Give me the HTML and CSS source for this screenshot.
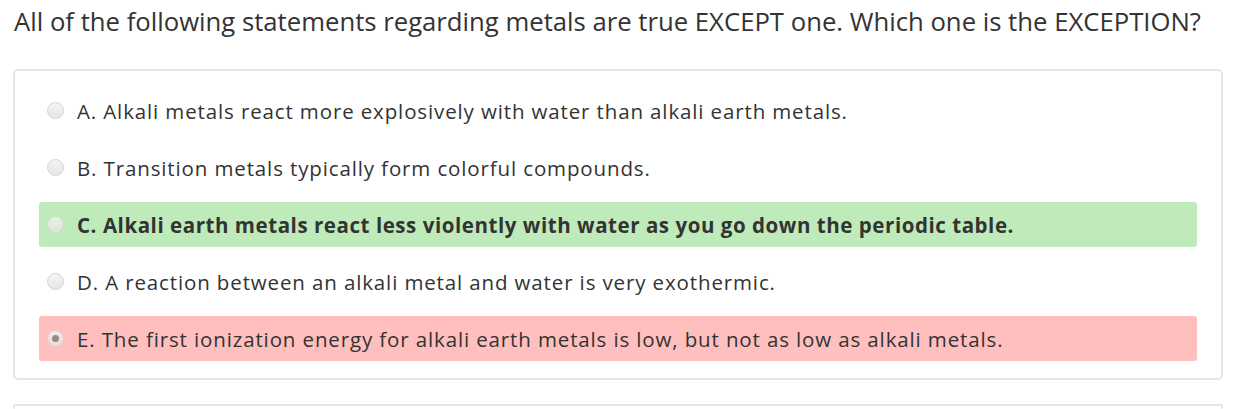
FILE: index.html
```html
<!DOCTYPE html>
<html lang="en">
<head>
  <meta charset="UTF-8">
  <title>Question</title>
  <link rel="stylesheet" href="styles.css">
</head>
<body>

  <h2 class="question">All of the following statements regarding metals are true EXCEPT one. Which one is the EXCEPTION?</h2>

  <div class="card">
    <label class="choice">
      <span class="radio"></span>
      <span class="text">A. Alkali metals react more explosively with water than alkali earth metals.</span>
    </label>
    <label class="choice">
      <span class="radio"></span>
      <span class="text">B. Transition metals typically form colorful compounds.</span>
    </label>
    <label class="choice correct">
      <span class="radio"></span>
      <span class="text">C. Alkali earth metals react less violently with water as you go down the periodic table.</span>
    </label>
    <label class="choice">
      <span class="radio"></span>
      <span class="text">D. A reaction between an alkali metal and water is very exothermic.</span>
    </label>
    <label class="choice wrong">
      <span class="radio checked"></span>
      <span class="text">E. The first ionization energy for alkali earth metals is low, but not as low as alkali metals.</span>
    </label>
  </div>

  <div class="card next"></div>

</body>
</html>
```

FILE: styles.css
```css
* {
  margin: 0;
  padding: 0;
  box-sizing: border-box;
}
html {
  height: 409px;
  overflow: hidden;
}
body {
  font-family: "Open Sans", sans-serif;
  background-color: #fff;
  color: #333;
  padding: 0 28px 0 13px;
}
.question {
  font-weight: normal;
  font-size: 25.7px;
  line-height: 34px;
  color: #333;
  padding: 5px 0 0 1px;
  margin-bottom: 30px;
}
.card {
  border: 2px solid #e3e7eb;
  border-radius: 5px;
  padding: 17px 24px 17px 24px;
  display: flex;
  flex-direction: column;
  gap: 12px;
}
.card.next {
  margin-top: 24px;
  height: 5px;
  border-bottom: none;
  padding: 0;
}
.choice {
  display: flex;
  align-items: center;
  height: 45px;
  padding-left: 8px;
  border-radius: 3px;
  font-size: 20.5px;
  letter-spacing: 0.87px;
  color: #333;
}
.choice.correct {
  background-color: #bfeab9;
  font-weight: bold;
  letter-spacing: 0.55px;
}
.choice.wrong {
  background-color: #ffbfbe;
}
.radio {
  width: 17px;
  height: 17px;
  border-radius: 50%;
  border: 1px solid #d4d4d4;
  background: linear-gradient(#f4f4f4, #e6e6e6);
  margin-right: 13px;
  flex-shrink: 0;
  display: flex;
  align-items: center;
  justify-content: center;
}
.choice.correct .radio,
.choice.wrong .radio {
  opacity: 0.75;
}
.radio.checked::after {
  content: "";
  width: 7px;
  height: 7px;
  border-radius: 50%;
  background: #777;
}
```
